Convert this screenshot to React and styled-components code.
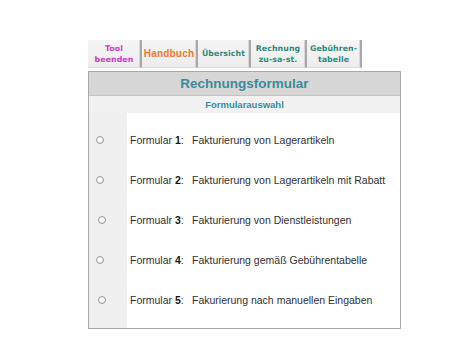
import styled, { createGlobalStyle } from "styled-components";

const GlobalStyle = createGlobalStyle`
  html, body {
    margin: 0;
    padding: 0;
    background: #ffffff;
  }
  body {
    font-family: "Liberation Sans", Arial, sans-serif;
  }
`

const Page = styled.div`
  width: 474px;
  height: 355px;
  padding: 40px 0 0 88px;
  box-sizing: border-box;
`

const TabBar = styled.div`
  display: flex;
  height: 28px;
`

const Tab = styled.div`
  display: flex;
  align-items: center;
  justify-content: center;
  text-align: center;
  box-sizing: border-box;
  width: ${(props) => props.w}px;
  height: 28px;
  background: linear-gradient(#f5f5f5, #ededed);
  border-right: 2px solid #a8a8a8;
  border-bottom: 1px solid #dadada;
  box-shadow: inset -1px 0 0 #d8d8d8;
  color: ${(props) => props.color};
  font-family: ${(props) => props.big ? '"Liberation Sans", Arial, sans-serif' : '"DejaVu Sans", Verdana, sans-serif'};
  font-weight: bold;
  font-size: ${(props) => props.big ? '10px' : '7.8px'};
  letter-spacing: ${(props) => props.big ? '0.2px' : '0.1px'};
  line-height: 11px;
  cursor: pointer;
`

const Panel = styled.div`
  margin-top: 3px;
  width: 313px;
  height: 258px;
  box-sizing: border-box;
  border: 1px solid #a9a9a9;
  display: flex;
  flex-direction: column;
`

const Title = styled.div`
  height: 24px;
  display: flex;
  align-items: center;
  justify-content: center;
  background: #d6d6d6;
  border-bottom: 1px solid #c4c4c4;
  color: #3b8b9b;
  font-weight: bold;
  font-size: 13.5px;
`

const SubTitle = styled.div`
  height: 17px;
  display: flex;
  align-items: center;
  justify-content: center;
  background: #f1f1f1;
  color: #3b8b9b;
  font-weight: bold;
  font-size: 9.5px;
`

const Body = styled.div`
  flex: 1;
  display: grid;
  grid-template-columns: 38px 1fr;
  background: linear-gradient(to right, #efefef 38px, #ffffff 38px);
  padding: 7px 0 8px;
`

const RadioCell = styled.div`
  height: 40px;
  display: flex;
  align-items: center;
  padding-left: ${(props) => props.shift ? 9 : 7}px;
`

const Radio = styled.span`
  display: block;
  width: 6px;
  height: 6px;
  border-radius: 50%;
  border: 1px solid #9a9a9a;
  background: radial-gradient(circle at 40% 35%, #ffffff, #e4e4e4);
`

const TextCell = styled.div`
  height: 40px;
  display: flex;
  align-items: center;
  padding-left: 3px;
  font-size: 10.5px;
  color: #303030;
`

const Label = styled.span`
  width: 62px;
  flex-shrink: 0;
  b {
    font-weight: 600;
    color: #151515;
  }
`

const tabs = [
  { lines: ["Tool", "beenden"], color: "#cc3ccc", w: 54 },
  { lines: ["Handbuch"], color: "#e57a30", w: 56, big: true },
  { lines: ["Übersicht"], color: "#2d8a7e", w: 53 },
  { lines: ["Rechnung", "zu-sa-st."], color: "#2d8a7e", w: 56 },
  { lines: ["Gebühren-", "tabelle"], color: "#2d8a7e", w: 55 },
]

const rows = [
  { name: "Formular", nr: "1", text: "Fakturierung von Lagerartikeln" },
  { name: "Formular", nr: "2", text: "Fakturierung von Lagerartikeln mit Rabatt" },
  { name: "Formualr", nr: "3", text: "Fakturierung von Dienstleistungen", shift: true },
  { name: "Formular", nr: "4", text: "Fakturierung gemäß Gebührentabelle" },
  { name: "Formular", nr: "5", text: "Fakurierung nach manuellen Eingaben", shift: true },
]

const App = () => {
  return (
    <Page>
      <GlobalStyle />
      <TabBar>
        {tabs.map((t, key) => (
          <Tab key={key} w={t.w} color={t.color} big={t.big}>
            <div>
              {t.lines.map((l, i) => <div key={i}>{l}</div>)}
            </div>
          </Tab>
        ))}
      </TabBar>
      <Panel>
        <Title>Rechnungsformular</Title>
        <SubTitle>Formularauswahl</SubTitle>
        <Body>
          {rows.map((r, key) => [
            <RadioCell key={"r" + key} shift={r.shift}>
              <Radio />
            </RadioCell>,
            <TextCell key={"t" + key}>
              <Label>{r.name} <b>{r.nr}</b>:</Label>
              <span>{r.text}</span>
            </TextCell>,
          ])}
        </Body>
      </Panel>
    </Page>
  );
}

export default App;
